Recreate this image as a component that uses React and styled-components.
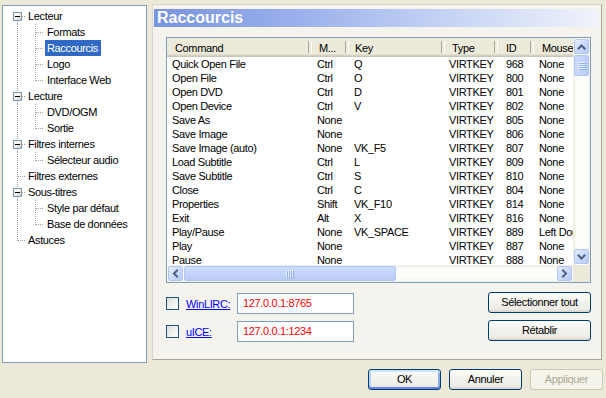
import React from 'react';
import styled, { createGlobalStyle } from 'styled-components';

const Global = createGlobalStyle`
  html, body { margin: 0; padding: 0; background: #ECE9D8; }
  body {
    font-family: "Liberation Sans", Arial, sans-serif;
    font-size: 11px;
    letter-spacing: -0.35px;
    color: #000;
  }
  * { box-sizing: border-box; }
`;

const Window = styled.div`
  width: 606px;
  height: 398px;
  padding: 4px 3px 0 2px;
  display: flex;
  flex-direction: column;
  overflow: hidden;
  background: #ECE9D8;
`;

const TopRow = styled.div`
  display: flex;
  align-items: flex-start;
  gap: 5px;
`;

/* ---------- Tree ---------- */
const Tree = styled.div`
  margin-top: 1px;
  width: 145px;
  height: 358px;
  background: #fff;
  border: 1px solid #7F9DB9;
  padding: 2px 0 0 5px;
`;

const TreeRow = styled.div`
  display: flex;
  height: 16px;
`;

const ConnSvg = styled.svg`
  flex: none;
  display: block;
`;

const TreeLabel = styled.span`
  margin-left: ${p => (p.$child ? 1 : 0)}px;
  padding: 0 3px 0 2px;
  line-height: 16px;
  white-space: nowrap;
  background: ${p => (p.$sel ? '#316AC5' : 'transparent')};
  color: ${p => (p.$sel ? '#fff' : '#000')};
`;

const DOT = '#A0A0A0';

function Connector({ type, id }) {
  const v = (y1, y2) => (
    <path d={`M9.5 ${y1} V${y2}`} stroke={DOT} strokeDasharray="1 1" fill="none" />
  );
  const h = x1 => (
    <path d={`M${x1} 8.5 H18`} stroke={DOT} strokeDasharray="1 1" fill="none" />
  );
  const box = (
    <g>
      <defs>
        <linearGradient id={id} x1="0" y1="0" x2="1" y2="1">
          <stop offset="0" stopColor="#FFFFFF" />
          <stop offset="0.5" stopColor="#F4F2EA" />
          <stop offset="1" stopColor="#C9C3B0" />
        </linearGradient>
      </defs>
      <rect x="5.5" y="4.5" width="8" height="8" fill={`url(#${id})`} stroke="#7A98B6" />
      <path d="M7 8.5 H12" stroke="#000" />
    </g>
  );
  return (
    <ConnSvg width="18" height="16" viewBox="0 0 18 16" shapeRendering="crispEdges">
      {type === 'pipe' && v(0, 16)}
      {type === 'tee' && (<>{v(0, 16)}{h(10)}</>)}
      {type === 'elbow' && (<>{v(0, 9)}{h(10)}</>)}
      {type === 'minusFirst' && (<>{v(13, 16)}{h(14)}{box}</>)}
      {type === 'minus' && (<>{v(0, 4)}{v(13, 16)}{h(14)}{box}</>)}
    </ConnSvg>
  );
}

const treeItems = [
  { label: 'Lecteur', cells: ['minusFirst'] },
  { label: 'Formats', cells: ['pipe', 'tee'] },
  { label: 'Raccourcis', cells: ['pipe', 'tee'], sel: true },
  { label: 'Logo', cells: ['pipe', 'tee'] },
  { label: 'Interface Web', cells: ['pipe', 'elbow'] },
  { label: 'Lecture', cells: ['minus'] },
  { label: 'DVD/OGM', cells: ['pipe', 'tee'] },
  { label: 'Sortie', cells: ['pipe', 'elbow'] },
  { label: 'Filtres internes', cells: ['minus'] },
  { label: 'Sélecteur audio', cells: ['pipe', 'elbow'] },
  { label: 'Filtres externes', cells: ['tee'] },
  { label: 'Sous-titres', cells: ['minus'] },
  { label: 'Style par défaut', cells: ['pipe', 'tee'] },
  { label: 'Base de données', cells: ['pipe', 'elbow'] },
  { label: 'Astuces', cells: ['elbow'] },
];

/* ---------- Panel ---------- */
const Panel = styled.div`
  width: 450px;
  height: 356px;
  background: #F4F3EE;
  border: 1px solid;
  border-color: #D8D6CC #A9A79B #A9A79B #D8D6CC;
  padding: 4px 2px 0 1px;
  display: flex;
  flex-direction: column;
`;

const Title = styled.div`
  height: 18px;
  line-height: 18px;
  padding-left: 3px;
  font-size: 16px;
  font-weight: bold;
  letter-spacing: 0;
  color: #fff;
  background: linear-gradient(to right, #7894DE 0%, #9DB3EC 35%, #C4D2F4 65%, #F1F3FB 100%);
`;

const ListView = styled.div`
  margin: 10px 0 0 12px;
  width: 425px;
  height: 246px;
  border: 1px solid #7F9DB9;
  background: #fff;
  display: grid;
  grid-template-columns: 406px 17px;
  grid-template-rows: 227px 17px;
`;

const ListContent = styled.div`
  overflow: hidden;
`;

const HeaderRow = styled.div`
  display: flex;
  width: max-content;
  height: 19px;
  background: #EBEADB;
  box-shadow: inset 0 -1px #CBC7B8, inset 0 -2px #D6D2C2, inset 0 -3px #E2DECD;
`;

const HeaderCell = styled.div`
  position: relative;
  flex: none;
  width: ${p => p.$w}px;
  padding: 1px 0 0 ${p => p.$pad}px;
  line-height: 18px;
  white-space: nowrap;
  overflow: hidden;
  &::after {
    content: '';
    position: absolute;
    top: 3px;
    bottom: 4px;
    right: 0;
    width: 2px;
    border-left: 1px solid #ACA899;
    border-right: 1px solid #FFFFFF;
  }
`;

const DataRow = styled.div`
  display: flex;
  width: max-content;
  height: 14px;
`;

const DataCell = styled.div`
  flex: none;
  width: ${p => p.$w}px;
  padding-left: ${p => p.$pad}px;
  line-height: 14px;
  white-space: nowrap;
  overflow: hidden;
`;

const columns = [
  { key: 'cmd', title: 'Command', w: 145, hp: 8, rp: 5 },
  { key: 'mod', title: 'M...', w: 37, hp: 7, rp: 5 },
  { key: 'key', title: 'Key', w: 96, hp: 6, rp: 5 },
  { key: 'type', title: 'Type', w: 53, hp: 7, rp: 4 },
  { key: 'id', title: 'ID', w: 36, hp: 8, rp: 8 },
  { key: 'mouse', title: 'Mouse', w: 110, hp: 8, rp: 5 },
];

const rows = [
  ['Quick Open File', 'Ctrl', 'Q', 'VIRTKEY', '968', 'None'],
  ['Open File', 'Ctrl', 'O', 'VIRTKEY', '800', 'None'],
  ['Open DVD', 'Ctrl', 'D', 'VIRTKEY', '801', 'None'],
  ['Open Device', 'Ctrl', 'V', 'VIRTKEY', '802', 'None'],
  ['Save As', 'None', '', 'VIRTKEY', '805', 'None'],
  ['Save Image', 'None', '', 'VIRTKEY', '806', 'None'],
  ['Save Image (auto)', 'None', 'VK_F5', 'VIRTKEY', '807', 'None'],
  ['Load Subtitle', 'Ctrl', 'L', 'VIRTKEY', '809', 'None'],
  ['Save Subtitle', 'Ctrl', 'S', 'VIRTKEY', '810', 'None'],
  ['Close', 'Ctrl', 'C', 'VIRTKEY', '804', 'None'],
  ['Properties', 'Shift', 'VK_F10', 'VIRTKEY', '814', 'None'],
  ['Exit', 'Alt', 'X', 'VIRTKEY', '816', 'None'],
  ['Play/Pause', 'None', 'VK_SPACE', 'VIRTKEY', '889', 'Left Double Click'],
  ['Play', 'None', '', 'VIRTKEY', '887', 'None'],
  ['Pause', 'None', '', 'VIRTKEY', '888', 'None'],
];

/* ---------- Scrollbars ---------- */
const VScroll = styled.div`
  display: flex;
  flex-direction: column;
  background: linear-gradient(to right, #EEEDE5 0%, #FDFDFA 25%, #FDFDFA 75%, #F3F1EC 100%);
`;

const HScroll = styled.div`
  display: flex;
  background: linear-gradient(to bottom, #EEEDE5 0%, #FDFDFA 25%, #FDFDFA 75%, #F3F1EC 100%);
`;

const Corner = styled.div`
  background: #ECE9D8;
`;

const SBButton = styled.div`
  flex: none;
  width: 17px;
  height: 17px;
  padding: 1px;
  display: flex;
`;

const SBFace = styled.div`
  flex: 1;
  border: 1px solid #B3C6F2;
  border-radius: 2px;
  background: linear-gradient(135deg, #E6EEFE 0%, #CBDAFC 50%, #B7CAF7 100%);
  display: flex;
  align-items: center;
  justify-content: center;
`;

const VThumb = styled(SBFace)`
  flex: none;
  height: 21px;
  margin: 0 1px;
  background: linear-gradient(to right, #C9D8FC 0%, #C4D5FB 50%, #B8CBF6 100%);
`;

const HThumb = styled(SBFace)`
  flex: none;
  width: 212px;
  margin: 1px 0;
  background: linear-gradient(to bottom, #CEDCFC 0%, #C4D5FB 50%, #B8CBF6 100%);
`;

const Spacer = styled.div`
  flex: 1;
`;

const ARROW = '#4D6185';

function Arrow({ dir }) {
  const d = {
    up: 'M3.5 8.5 L6.5 5.5 L9.5 8.5',
    down: 'M3.5 5.5 L6.5 8.5 L9.5 5.5',
    left: 'M8 3.5 L5 6.5 L8 9.5',
    right: 'M5 3.5 L8 6.5 L5 9.5',
  }[dir];
  return (
    <svg width="13" height="13" viewBox="0 0 13 13">
      <path d={d} stroke={ARROW} strokeWidth="2" fill="none" strokeLinecap="square" />
    </svg>
  );
}

function GripV() {
  return (
    <svg width="8" height="8" viewBox="0 0 8 8" shapeRendering="crispEdges">
      {[0, 2, 4, 6].map(y => (
        <g key={y}>
          <rect x="0" y={y} width="7" height="1" fill="#EEF4FE" />
          <rect x="1" y={y + 1} width="7" height="1" fill="#8CB0F8" />
        </g>
      ))}
    </svg>
  );
}

function GripH() {
  return (
    <svg width="8" height="8" viewBox="0 0 8 8" shapeRendering="crispEdges">
      {[0, 2, 4, 6].map(x => (
        <g key={x}>
          <rect x={x} y="0" width="1" height="7" fill="#EEF4FE" />
          <rect x={x + 1} y="1" width="1" height="7" fill="#8CB0F8" />
        </g>
      ))}
    </svg>
  );
}

/* ---------- Options & buttons ---------- */
const BottomArea = styled.div`
  margin: 9px 0 0 12px;
  width: 425px;
  display: flex;
  justify-content: space-between;
`;

const OptionCol = styled.div`
  padding-top: 1px;
  display: flex;
  flex-direction: column;
  gap: 7px;
`;

const OptionRow = styled.div`
  height: 21px;
  display: flex;
  align-items: center;
`;

const Check = styled.span`
  flex: none;
  width: 13px;
  height: 13px;
  margin-right: 7px;
  border: 1px solid #1C5180;
  background: linear-gradient(135deg, #DCDCD7 0%, #F1F1EE 55%, #FFFFFF 100%);
`;

const LinkText = styled.span`
  width: 51px;
  color: #0000FF;
  text-decoration: underline;
  white-space: nowrap;
`;

const AddrBox = styled.div`
  width: 117px;
  height: 21px;
  border: 1px solid #7F9DB9;
  background: #fff;
  color: #FF0000;
  padding-left: 5px;
  line-height: 19px;
`;

const ButtonCol = styled.div`
  display: flex;
  flex-direction: column;
  gap: 7px;
`;

const Button = styled.div`
  width: ${p => p.$w || 73}px;
  height: 21px;
  border: 1px solid ${p => (p.$disabled ? '#C9C7BA' : '#003C74')};
  border-radius: 3px;
  text-align: center;
  line-height: 19px;
  color: ${p => (p.$disabled ? '#ACA899' : '#000')};
  background: ${p =>
    p.$disabled
      ? '#F5F4EA'
      : 'linear-gradient(to bottom, #FFFFFF 0%, #F4F3EE 40%, #ECEBE6 85%, #D6D0C5 100%)'};
  box-shadow: ${p =>
    p.$default
      ? 'inset 0 2px 0 #CEE7FF, inset 0 -2px 0 #6982EE, inset 2px 0 0 #B8D4F8, inset -2px 0 0 #89ADE4'
      : 'none'};
`;

const ButtonRow = styled.div`
  margin-top: 6px;
  display: flex;
  justify-content: flex-end;
  gap: 8px;
`;

export default function App() {
  return (
    <>
      <Global />
      <Window>
        <TopRow>
          <Tree>
            {treeItems.map((it, i) => (
              <TreeRow key={it.label}>
                {it.cells.map((c, j) => (
                  <Connector key={j} type={c} id={`bx${i}_${j}`} />
                ))}
                <TreeLabel $child={it.cells.length > 1} $sel={it.sel}>
                  {it.label}
                </TreeLabel>
              </TreeRow>
            ))}
          </Tree>

          <Panel>
            <Title>Raccourcis</Title>
            <ListView>
              <ListContent>
                <HeaderRow>
                  {columns.map(c => (
                    <HeaderCell key={c.key} $w={c.w} $pad={c.hp}>
                      {c.title}
                    </HeaderCell>
                  ))}
                </HeaderRow>
                {rows.map((r, i) => (
                  <DataRow key={i}>
                    {columns.map((c, j) => (
                      <DataCell key={c.key} $w={c.w} $pad={c.rp}>
                        {r[j]}
                      </DataCell>
                    ))}
                  </DataRow>
                ))}
              </ListContent>
              <VScroll>
                <SBButton>
                  <SBFace><Arrow dir="up" /></SBFace>
                </SBButton>
                <VThumb><GripV /></VThumb>
                <Spacer />
                <SBButton>
                  <SBFace><Arrow dir="down" /></SBFace>
                </SBButton>
              </VScroll>
              <HScroll>
                <SBButton>
                  <SBFace><Arrow dir="left" /></SBFace>
                </SBButton>
                <HThumb><GripH /></HThumb>
                <Spacer />
                <SBButton>
                  <SBFace><Arrow dir="right" /></SBFace>
                </SBButton>
              </HScroll>
              <Corner />
            </ListView>

            <BottomArea>
              <OptionCol>
                <OptionRow>
                  <Check />
                  <LinkText>WinLIRC:</LinkText>
                  <AddrBox>127.0.0.1:8765</AddrBox>
                </OptionRow>
                <OptionRow>
                  <Check />
                  <LinkText>uICE:</LinkText>
                  <AddrBox>127.0.0.1:1234</AddrBox>
                </OptionRow>
              </OptionCol>
              <ButtonCol>
                <Button $w={103}>Sélectionner tout</Button>
                <Button $w={103}>Rétablir</Button>
              </ButtonCol>
            </BottomArea>
          </Panel>
        </TopRow>

        <ButtonRow>
          <Button $default>OK</Button>
          <Button>Annuler</Button>
          <Button $disabled>Appliquer</Button>
        </ButtonRow>
      </Window>
    </>
  );
}
